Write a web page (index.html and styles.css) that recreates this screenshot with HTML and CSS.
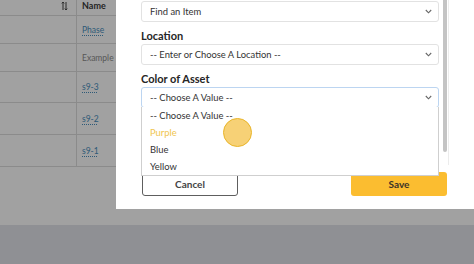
FILE: index.html
```html
<!DOCTYPE html>
<html>
<head>
<meta charset="utf-8">
<link rel="stylesheet" href="styles.css">
</head>
<body>
<div class="page">
  <div class="table">
    <div class="row head">
      <div class="cell-a">
        <svg class="sort" width="7" height="10" viewBox="0 0 7 10"><path d="M2 9V1M0.8 2.4L2 1L3.2 2.4M5 1v8M3.8 7.6L5 9L6.2 7.6" fill="none" stroke="#444" stroke-width="1"/></svg>
      </div>
      <div class="cell-b"><span class="th">Name</span></div>
    </div>
    <div class="row r1"><div class="cell-a"></div><div class="cell-b"><a class="link">Phase</a></div></div>
    <div class="row r2"><div class="cell-a"></div><div class="cell-b"><span class="muted">Example</span></div></div>
    <div class="row r3"><div class="cell-a"></div><div class="cell-b"><a class="link">s9-3</a></div></div>
    <div class="row r4"><div class="cell-a"></div><div class="cell-b"><a class="link">s9-2</a></div></div>
    <div class="row r5"><div class="cell-a"></div><div class="cell-b"><a class="link">s9-1</a></div></div>
  </div>
  <div class="spacer"></div>
  <div class="footer"></div>

  <div class="overlay"></div>

  <div class="modal">
    <div class="modal-body">
      <div class="form">
        <div class="field">
          <span>Find an Item</span>
          <svg class="chev" width="7" height="5" viewBox="0 0 7 5"><path d="M0.8 1L3.5 3.8L6.2 1" fill="none" stroke="#666" stroke-width="1.1"/></svg>
        </div>
        <div class="label">Location</div>
        <div class="field">
          <span>-- Enter or Choose A Location --</span>
          <svg class="chev" width="7" height="5" viewBox="0 0 7 5"><path d="M0.8 1L3.5 3.8L6.2 1" fill="none" stroke="#666" stroke-width="1.1"/></svg>
        </div>
        <div class="label">Color of Asset</div>
        <div class="select-wrap">
          <div class="field focus">
            <span>-- Choose A Value --</span>
            <svg class="chev" width="7" height="5" viewBox="0 0 7 5"><path d="M0.8 1L3.5 3.8L6.2 1" fill="none" stroke="#666" stroke-width="1.1"/></svg>
          </div>
          <ul class="options">
            <li>-- Choose A Value --</li>
            <li class="hover">Purple</li>
            <li>Blue</li>
            <li>Yellow</li>
          </ul>
        </div>
      </div>
      <div class="scrollbar"><div class="thumb"></div></div>
    </div>
    <div class="actions">
      <button class="btn cancel">Cancel</button>
      <button class="btn save">Save</button>
    </div>
  </div>

  <div class="click"></div>
</div>
</body>
</html>
```

FILE: styles.css
```css
* { box-sizing: border-box; }
body { margin: 0; font-family: Lato, "Noto Sans", sans-serif; }

.page {
  position: relative;
  width: 474px;
  height: 264px;
  overflow: hidden;
  background: #fff;
  display: flex;
  flex-direction: column;
}

.table { display: flex; flex-direction: column; }
.row { display: flex; border-bottom: 1px solid #dcdcdc; }
.row.head { height: 16px; }
.row.r1 { height: 28px; }
.row.r2 { height: 28px; }
.row.r3 { height: 31px; }
.row.r4 { height: 32px; }
.row.r5 { height: 32px; }
.cell-a {
  width: 77px;
  border-right: 1px solid #dcdcdc;
  display: flex;
  justify-content: flex-end;
  align-items: flex-start;
  padding-right: 8px;
}
.sort { margin-top: 1px; }
.cell-b {
  flex: 1;
  padding-left: 5px;
  display: flex;
  align-items: center;
  font-size: 8.5px;
}
.th { font-weight: 700; color: #3a3a3a; margin-top: -4px; font-size: 9px; }
.link { color: #4a8fbe; text-decoration: underline dotted; text-underline-offset: 2px; }
.muted { color: #8c8c8c; }

.spacer { flex: 1; }
.footer { height: 39px; background: #e3e4ea; }

.overlay { position: absolute; inset: 0; background: rgba(0, 0, 0, 0.37); }

.modal {
  position: absolute;
  left: 116px;
  top: 0;
  right: -20px;
  bottom: 55px;
  background: #fff;
  display: flex;
  flex-direction: column;
  padding: 0 0 13px 25px;
}
.modal-body {
  height: 165px;
  width: 308px;
  display: flex;
  gap: 4px;
  border-right: 1px solid #ececec;
}
.form { width: 298px; padding-top: 1px; display: flex; flex-direction: column; }
.field {
  height: 21px;
  border: 1px solid #e2e2e2;
  border-radius: 3px;
  display: flex;
  align-items: center;
  justify-content: space-between;
  padding: 0 6px 0 8px;
  font-size: 9.4px;
  color: #333;
}
.field.focus { border-color: #bcd5f1; }
.label {
  font-size: 11px;
  font-weight: 700;
  color: #262626;
  line-height: 14px;
  margin: 7px 0 1px;
}
.select-wrap { position: relative; }
.options {
  position: absolute;
  left: 0;
  right: 0;
  top: 20px;
  margin: 0;
  padding: 0;
  list-style: none;
  background: #fff;
  border: 1px solid #cfcfcf;
  border-top: none;
  z-index: 3;
}
.options li {
  height: 17px;
  line-height: 17px;
  padding-left: 8px;
  font-size: 9.4px;
  color: #333;
}
.options li.hover { color: #f0c650; }

.scrollbar { width: 4px; }
.thumb { width: 4px; height: 152px; background: #c4c4c4; border-radius: 0 0 2px 2px; }

.actions {
  width: 306px;
  margin-top: 7px;
  display: flex;
  justify-content: space-between;
  padding-left: 1px;
}
.btn {
  width: 96px;
  height: 24px;
  border-radius: 3px;
  font-family: inherit;
  font-size: 10px;
  font-weight: 700;
  padding: 0;
}
.cancel { background: #fff; border: 1px solid #5e5e5e; color: #444; }
.save { background: #fbbd30; border: none; color: #3a3328; }

.click {
  position: absolute;
  left: 223px;
  top: 118px;
  width: 29px;
  height: 29px;
  border-radius: 50%;
  background: rgba(245, 197, 84, 0.8);
  border: 1.5px solid #e9b52a;
  z-index: 5;
}
```
